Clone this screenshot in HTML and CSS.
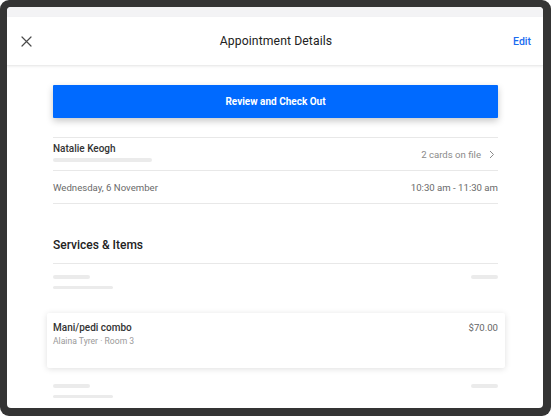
FILE: index.html
```html
<!DOCTYPE html>
<html lang="en">
<head>
<meta charset="utf-8">
<title>Appointment Details</title>
<link rel="stylesheet" href="styles.css">
</head>
<body>
<div class="device">
  <div class="screen">
    <div class="statusbar"></div>
    <header class="topbar">
      <button class="close" aria-label="Close">
        <svg width="11" height="11" viewBox="0 0 11 11"><path d="M1 1 L10 10 M10 1 L1 10" stroke="#4a4a4a" stroke-width="1.2" fill="none" stroke-linecap="round"/></svg>
      </button>
      <h1 class="title">Appointment Details</h1>
      <a class="edit" href="#">Edit</a>
    </header>
    <main class="content">
      <button class="primary">Review and Check Out</button>
      <div class="list">
        <div class="row">
          <div class="customer">
            <div class="name">Natalie Keogh</div>
            <div class="bar bar-name"></div>
          </div>
          <div class="meta">2 cards on file
            <svg class="chev" width="6" height="9" viewBox="0 0 6 9"><path d="M1 1 L4.5 4.5 L1 8" stroke="#8a8a8a" stroke-width="1" fill="none"/></svg>
          </div>
        </div>
        <div class="row">
          <div class="date">Wednesday, 6 November</div>
          <div class="time">10:30 am - 11:30 am</div>
        </div>
      </div>
      <h2 class="section">Services &amp; Items</h2>
      <div class="items">
        <div class="skeleton">
          <div class="sk-left"><div class="bar bar-s"></div><div class="bar bar-m"></div></div>
          <div class="bar bar-r"></div>
        </div>
        <div class="card">
          <div class="card-main">
            <div class="svc">Mani/pedi combo</div>
            <div class="staff">Alaina Tyrer · Room 3</div>
          </div>
          <div class="price">$70.00</div>
        </div>
        <div class="skeleton skeleton-bottom">
          <div class="sk-left"><div class="bar bar-s"></div><div class="bar bar-m"></div></div>
          <div class="bar bar-r"></div>
        </div>
      </div>
    </main>
  </div>
</div>
</body>
</html>
```
FILE: styles.css
```css
* { box-sizing: border-box; }
html, body { margin: 0; padding: 0; background: #ffffff; }
body { font-family: Roboto, "Liberation Sans", Arial, sans-serif; color: #333; }

.device {
  width: 551px;
  height: 416px;
  background: #343434;
  border-radius: 9px;
  padding: 7px 8px 8px 7px;
}
.screen {
  width: 536px;
  height: 401px;
  background: #fff;
  border-radius: 4px;
  overflow: hidden;
}
.statusbar { height: 10px; background: #f3f3f5; }

.topbar {
  height: 49px;
  display: grid;
  grid-template-columns: 1fr auto 1fr;
  align-items: center;
  padding: 0 12px 0 14px;
  border-bottom: 1px solid #ececec;
  box-shadow: 0 1px 2px rgba(0,0,0,0.06);
}
.close {
  width: 11px; height: 11px; padding: 0; border: 0; background: none;
  display: flex;
  justify-self: start;
}
.title {
  margin: 0;
  font-size: 12.2px;
  font-weight: 400;
  color: #222;
  letter-spacing: 0.1px;
}
.edit {
  justify-self: end;
  font-size: 10.5px;
  font-weight: 500;
  color: #1a6cf0;
  text-decoration: none;
}

.content { padding: 0 45px 0 46px; }
.primary {
  display: block;
  width: 100%;
  height: 33px;
  margin-top: 19px;
  border: 0;
  border-radius: 1px;
  background: #006aff;
  color: #fff;
  font-family: inherit;
  font-size: 10px;
  font-weight: 700;
  box-shadow: 0 3px 7px rgba(0,0,0,0.22);
}

.list { margin-top: 19px; border-top: 1px solid #e8e8e8; }
.row {
  height: 33px;
  display: flex;
  align-items: center;
  justify-content: space-between;
  border-bottom: 1px solid #e8e8e8;
}
.customer { align-self: flex-start; padding-top: 4px; }
.name { font-size: 10px; font-weight: 500; color: #333; line-height: 13px; }
.bar { height: 3.5px; border-radius: 2px; background: #ebebeb; }
.bar-name { width: 99px; margin-top: 3px; }
.meta { font-size: 9.6px; color: #8a8a8a; display: flex; align-items: center; }
.chev { margin-left: 8px; margin-right: 3px; }
.date, .time { font-size: 9.6px; color: #6a6a6a; }

.section {
  margin: 33px 0 0;
  font-size: 12px;
  font-weight: 500;
  color: #222;
  line-height: 16px;
  padding-bottom: 10px;
  border-bottom: 1px solid #e8e8e8;
}

.skeleton {
  display: flex;
  justify-content: space-between;
  align-items: flex-start;
  padding-top: 11px;
}
.sk-left { display: flex; flex-direction: column; gap: 7px; }
.bar-s { width: 37px; }
.bar-m { width: 60px; }
.bar-r { width: 27px; }
.skeleton-bottom { padding-top: 16px; }

.card {
  margin: 24px -7px 0 -6px;
  height: 55px;
  background: #fff;
  border-radius: 2px;
  box-shadow: 0 1px 6px rgba(0,0,0,0.13);
  padding: 8px 7px 0 6px;
  display: flex;
  justify-content: space-between;
  align-items: flex-start;
}
.svc { font-size: 10px; font-weight: 500; color: #333; line-height: 13px; }
.staff { font-size: 8.6px; color: #9a9a9a; line-height: 12px; margin-top: 1px; }
.price { font-size: 9.6px; color: #666; line-height: 13px; }
```
